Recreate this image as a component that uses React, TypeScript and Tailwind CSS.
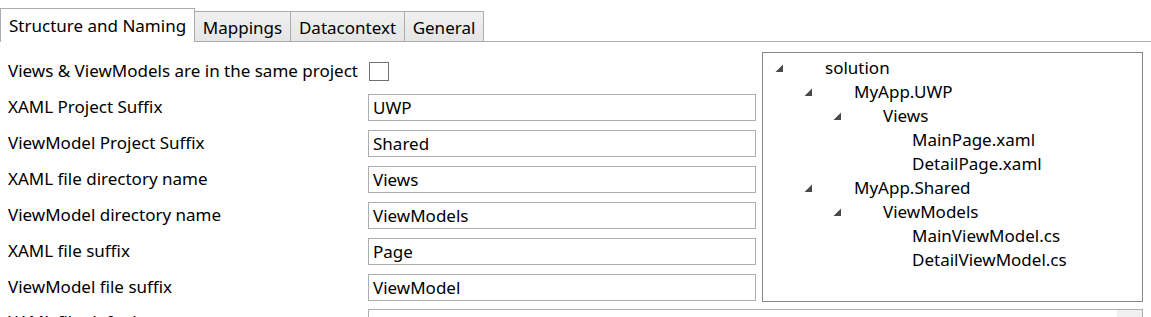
const tabs = ["Structure and Naming", "Mappings", "Datacontext", "General"];

const fields = [
  { label: "XAML Project Suffix", value: "UWP" },
  { label: "ViewModel Project Suffix", value: "Shared" },
  { label: "XAML file directory name", value: "Views" },
  { label: "ViewModel directory name", value: "ViewModels" },
  { label: "XAML file suffix", value: "Page" },
  { label: "ViewModel file suffix", value: "ViewModel" },
];

const tree = [
  { level: 0, text: "solution", open: true },
  { level: 1, text: "MyApp.UWP", open: true },
  { level: 2, text: "Views", open: true },
  { level: 3, text: "MainPage.xaml" },
  { level: 3, text: "DetailPage.xaml" },
  { level: 1, text: "MyApp.Shared", open: true },
  { level: 2, text: "ViewModels", open: true },
  { level: 3, text: "MainViewModel.cs" },
  { level: 3, text: "DetailViewModel.cs" },
];

const padLeft = ["pl-[12px]", "pl-[41px]", "pl-[70px]", "pl-[99px]"];

function Expander() {
  return (
    <svg width="9" height="9" viewBox="0 0 9 9" className="shrink-0">
      <polygon points="8,0.5 8,8 0.5,8" fill="#4a4a4a" />
    </svg>
  );
}

function TextBox({ value, wide }: { value: string; wide?: boolean }) {
  return (
    <div className="h-[27px] border border-[#abadb3] bg-white flex items-center px-[4px] text-black relative">
      <span className="leading-none">{value}</span>
      {wide && (
        <div className="absolute right-0 top-0 bottom-0 w-[25px] bg-[#f0f0f0]"></div>
      )}
    </div>
  );
}

export default function App() {
  return (
    <div
      className="w-[1151px] h-[317px] overflow-hidden bg-white text-black text-[17px]"
      style={{ fontFamily: '"Noto Sans", "Open Sans", sans-serif' }}
    >
      <div className="h-[42px] flex items-end border-b border-[#acacac] pr-[8px]">
        {tabs.map((t, i) =>
          i === 0 ? (
            <div
              key={t}
              className="h-[34px] w-[195px] -mb-px bg-white border border-b-0 border-[#acacac] flex items-center pl-[8px] relative z-10"
            >
              {t}
            </div>
          ) : (
            <div
              key={t}
              className={`h-[30px] pt-[2px] border border-b-0 border-l-0 border-[#acacac] bg-gradient-to-b from-[#f0f0f0] to-[#e5e5e5] flex items-center justify-center ${
                i === 1 ? "w-[96px]" : i === 2 ? "w-[114px]" : "w-[79px]"
              }`}
            >
              {t}
            </div>
          )
        )}
      </div>

      <div className="grid grid-cols-[360px_388px_387px] auto-rows-[36px] pl-[8px] pt-[11px]">
        <div className="flex items-center whitespace-nowrap">Views &amp; ViewModels are in the same project</div>
        <div className="flex items-center">
          <div className="w-[20px] h-[19px] border border-[#707070] bg-white ml-px"></div>
        </div>
        <div className="row-span-7 ml-[6px] -mt-px h-[250px] border border-[#828790] pt-[3px]">
          {tree.map((n) => (
            <div key={n.text} className={`h-[24px] flex items-center ${padLeft[n.level]}`}>
              <div className="w-[50px] flex items-center">{n.open && <Expander />}</div>
              <span>{n.text}</span>
            </div>
          ))}
        </div>

        {fields.map((f) => (
          <div key={f.label} className="contents">
            <div className="flex items-center whitespace-nowrap">{f.label}</div>
            <div className="flex items-center">
              <div className="w-full">
                <TextBox value={f.value} />
              </div>
            </div>
          </div>
        ))}

        <div className="flex items-start pt-[4px] whitespace-nowrap">XAML file default namespace</div>
        <div className="col-span-2 pt-[4px]">
          <TextBox value="" wide />
        </div>
      </div>
    </div>
  );
}
